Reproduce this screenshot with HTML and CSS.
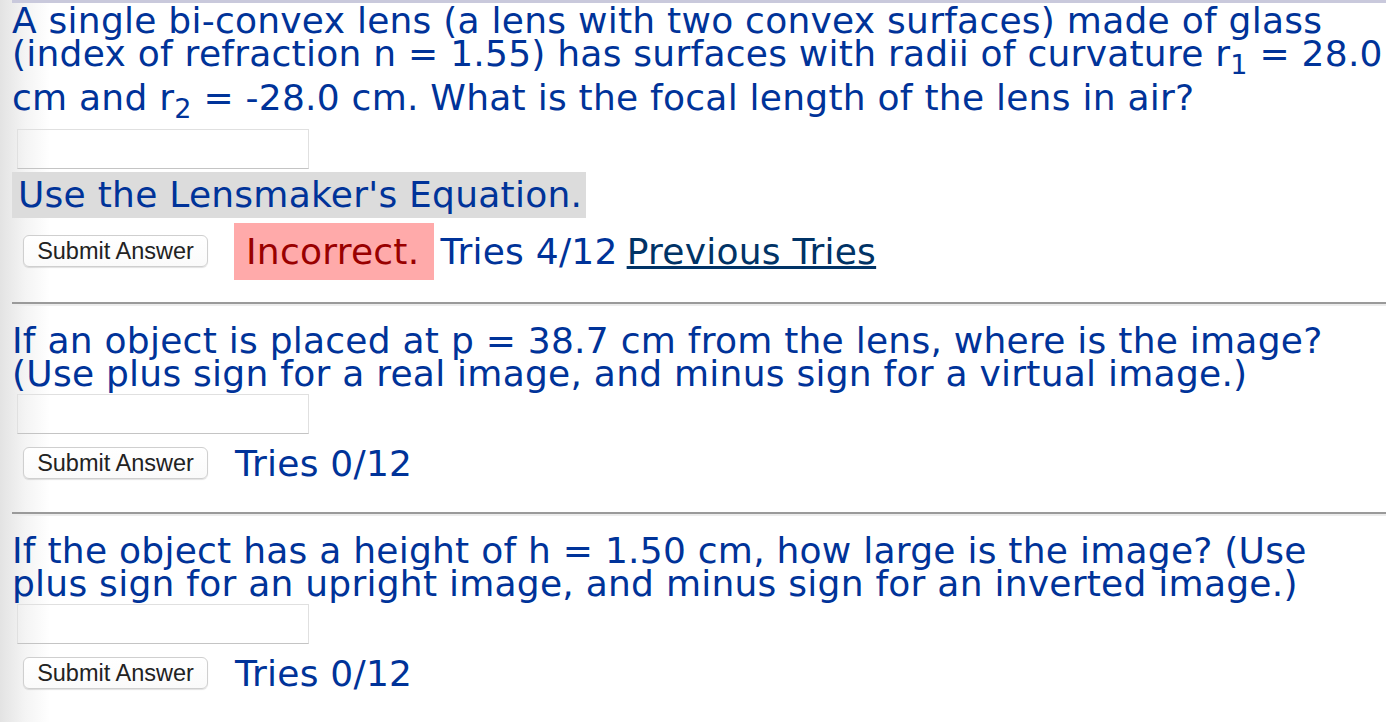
FILE: index.html
```html
<!DOCTYPE html>
<html lang="en">
<head>
  <meta charset="UTF-8" />
  <title>Lensmaker's Equation</title>
  <link rel="stylesheet" href="styles.css">
</head>
<body>

<div class="problem">
  <div class="part first">
    <p class="question">A single bi-convex lens (a lens with two convex surfaces) made of glass (index of refraction n = 1.55) has surfaces with radii of curvature r<sub>1</sub> = 28.0 cm and r<sub>2</sub> = -28.0 cm. What is the focal length of the lens in air?</p>
    <input type="text" class="answer">
    <div><span class="hint">Use the Lensmaker's Equation.</span></div>
    <div class="row">
      <button class="submit">Submit Answer</button>
      <span class="incorrect">Incorrect.</span>
      <span class="tries">Tries 4/12</span>
      <a href="#" class="prev">Previous Tries</a>
    </div>
  </div>

  <hr>

  <div class="part">
    <p class="question">If an object is placed at p = 38.7 cm from the lens, where is the image? (Use plus sign for a real image, and minus sign for a virtual image.)</p>
    <input type="text" class="answer">
    <div class="row">
      <button class="submit">Submit Answer</button>
      <span class="tries">Tries 0/12</span>
    </div>
  </div>

  <hr>

  <div class="part">
    <p class="question">If the object has a height of h = 1.50 cm, how large is the image? (Use plus sign for an upright image, and minus sign for an inverted image.)</p>
    <input type="text" class="answer">
    <div class="row">
      <button class="submit">Submit Answer</button>
      <span class="tries">Tries 0/12</span>
    </div>
  </div>
</div>

</body>
</html>
```

FILE: styles.css
```css
html, body {
  height: 100%;
}
body {
  margin: 0;
  font-family: "DejaVu Sans", Verdana, sans-serif;
  font-size: 36px;
  letter-spacing: 0.25px;
  color: #003399;
  background: linear-gradient(to right, #e3e3e3 0, #f4f4f4 25px, #fff 50px);
}
.problem {
  margin-left: 12px;
  width: 1374px;
  border-top: 3px solid #c9c9dc;
  padding-top: 1px;
}
.first {
  padding-bottom: 2px;
}
.question {
  margin: 0;
  line-height: 33px;
}
sub {
  font-size: 0.75em;
}
.answer {
  display: block;
  width: 292px;
  height: 40px;
  box-sizing: border-box;
  margin: 4px 0 0 5px;
  background: transparent;
  border: 1px solid #e0e0e0;
  border-bottom-color: #c4c4c4;
  font-size: 20px;
}
.hint {
  display: inline-block;
  margin-top: 3px;
  padding: 0 4px 0 6px;
  line-height: 46px;
  background: #dcdcdc;
}
.row {
  display: flex;
  align-items: center;
  min-height: 58px;
  margin-top: 0;
}
.first .row {
  margin-top: 4px;
}
.submit {
  width: 185px;
  height: 32px;
  margin-left: 11px;
  padding: 0;
  font-family: "Liberation Sans", Arial, sans-serif;
  font-size: 23.5px;
  letter-spacing: 0;
  color: #222;
  background: linear-gradient(#fff, #fafafa);
  border: 1px solid #cfcfcf;
  border-radius: 6px;
  box-shadow: 0 1px 1px rgba(0, 0, 0, 0.12);
}
.incorrect {
  margin-left: 26px;
  padding: 8px 15px 8px 12px;
  background: #ffaaaa;
  color: #990000;
}
.tries {
  margin-left: 6px;
}
.submit + .tries {
  margin-left: 27px;
}
.prev {
  margin-left: 9px;
  color: #003366;
}
hr {
  height: 0;
  margin: 20px 0 18px;
  border: 0;
  border-top: 2px solid #9a9a9a;
  border-bottom: 2px solid #ececec;
}
```
